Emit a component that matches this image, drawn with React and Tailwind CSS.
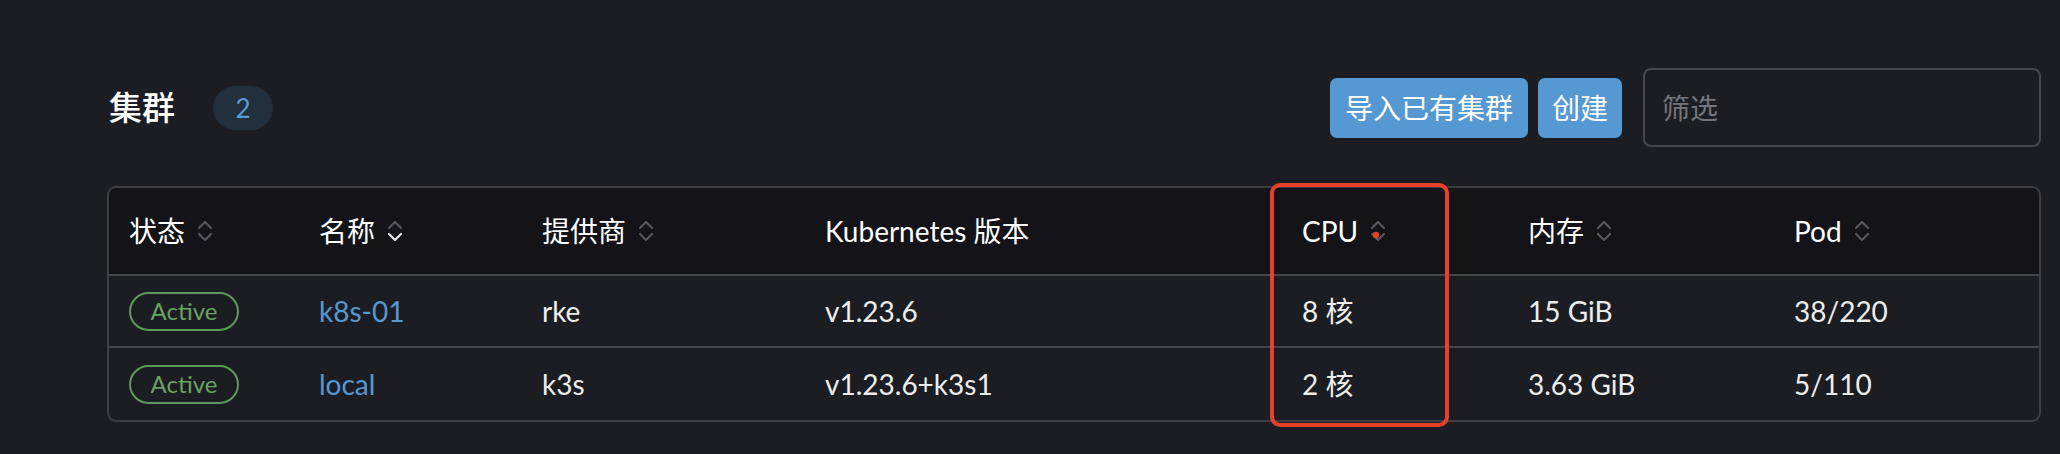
import React from "react";

const font = { fontFamily: 'Lato, "Noto Sans CJK SC", "Noto Sans", sans-serif' };

function SortIcon({ active, dot }) {
  return (
    <svg width="16" height="22" viewBox="0 0 16 22" fill="none" className="shrink-0">
      <polyline points="2,8 8,2 14,8" stroke="#55565c" strokeWidth="2.2" strokeLinecap="round" strokeLinejoin="round" />
      <polyline
        points="2,14 8,20 14,14"
        stroke={active ? "#e6e6e6" : "#55565c"}
        strokeWidth="2.2"
        strokeLinecap="round"
        strokeLinejoin="round"
      />
      {dot && <circle cx="6" cy="15" r="3.2" fill="#e8402b" />}
    </svg>
  );
}

const columns = [
  { label: "状态", sort: true },
  { label: "名称", sort: true, active: true },
  { label: "提供商", sort: true },
  { label: "Kubernetes 版本" },
  { label: "CPU", sort: true, dot: true },
  { label: "内存", sort: true },
  { label: "Pod", sort: true },
];

const rows = [
  { name: "k8s-01", provider: "rke", version: "v1.23.6", cpu: "8 核", mem: "15 GiB", pods: "38/220" },
  { name: "local", provider: "k3s", version: "v1.23.6+k3s1", cpu: "2 核", mem: "3.63 GiB", pods: "5/110" },
];

const grid = "grid grid-cols-[190px_223px_283px_477px_226px_266px_1fr] items-center pl-[20px]";

export default function App() {
  return (
    <div style={font} className="relative w-full h-[454px] bg-[#1c1d22] pl-[107px] pr-[19px] pt-[68px] text-[#ededed]">
      {/* header */}
      <div className="flex items-center justify-between h-[79px]">
        <div className="flex items-center">
          <h1 className="text-[33px] font-medium leading-none text-white pl-[2px]">集群</h1>
          <span className="ml-[38px] flex items-center justify-center w-[60px] h-[44px] rounded-[22px] bg-[#222f3d] text-[26px] leading-none text-[#5a9bd5]">
            2
          </span>
        </div>
        <div className="flex items-center">
          <button className="h-[60px] px-[15px] rounded-[7px] bg-[#5699d2] text-white text-[28px] leading-none">
            导入已有集群
          </button>
          <button className="ml-[10px] h-[60px] px-[14px] rounded-[7px] bg-[#5699d2] text-white text-[28px] leading-none">
            创建
          </button>
          <input
            placeholder="筛选"
            className="ml-[21px] w-[398px] h-[79px] border-2 border-[#46474c] rounded-[8px] bg-transparent pl-[17px] text-[28px] text-white placeholder:text-[#74757a] outline-none"
          />
        </div>
      </div>

      {/* table */}
      <div className="mt-[39px] border-2 border-[#3d3e44] rounded-[9px] overflow-hidden">
        <div className={`${grid} h-[88px] bg-[#141418] border-b-2 border-[#45464c]`}>
          {columns.map((c) => (
            <div key={c.label} className="flex items-center gap-[12px] text-[28px] text-white">
              <span>{c.label}</span>
              {c.sort && <SortIcon active={c.active} dot={c.dot} />}
            </div>
          ))}
        </div>
        {rows.map((r, i) => (
          <div key={r.name} className={`${grid} h-[72px] text-[28px] ${i === 0 ? "border-b-2 border-[#45464c]" : ""}`}>
            <div>
              <span className="flex items-center justify-center w-[110px] h-[39px] border-2 border-[#5e9a5c] rounded-full text-[24px] text-[#6aa263]">
                Active
              </span>
            </div>
            <div className="text-[#5599d4]">{r.name}</div>
            <div>{r.provider}</div>
            <div>{r.version}</div>
            <div>{r.cpu}</div>
            <div>{r.mem}</div>
            <div>{r.pods}</div>
          </div>
        ))}
      </div>

      {/* annotation box */}
      <div className="absolute left-[1270px] top-[183px] w-[179px] h-[244px] border-4 border-[#e8402b] rounded-[10px] pointer-events-none" />
    </div>
  );
}
